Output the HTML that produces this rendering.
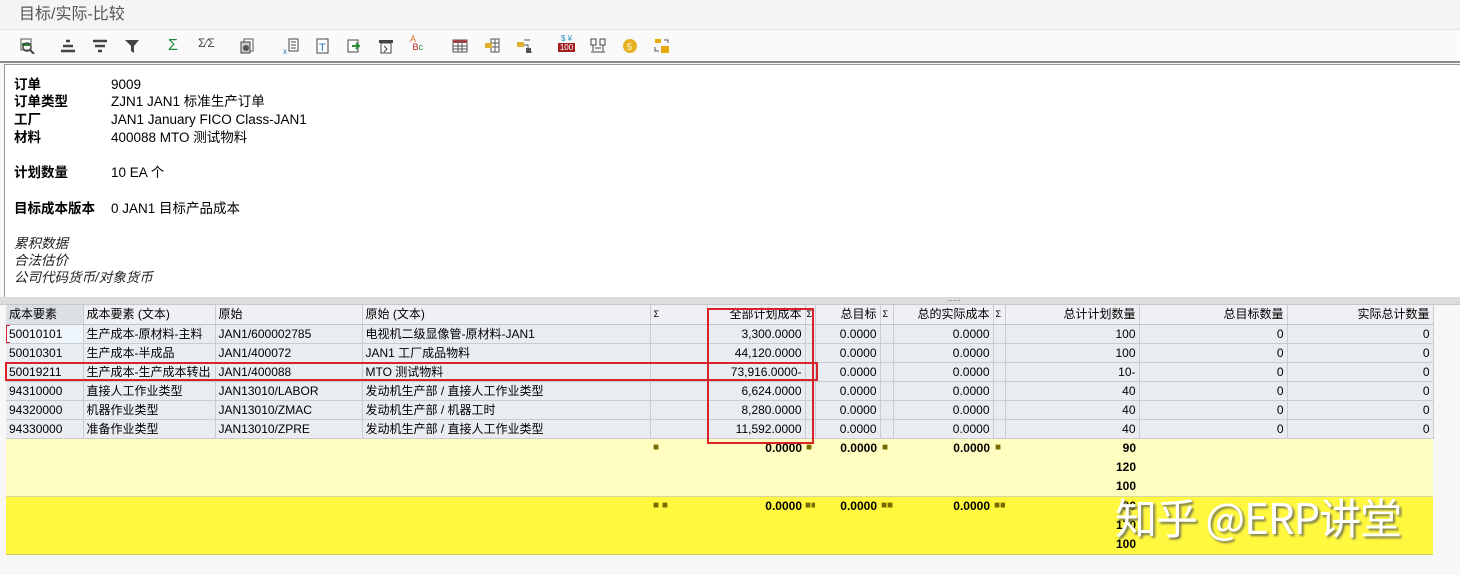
<!DOCTYPE html>
<html><head><meta charset="utf-8"><style>
*{margin:0;padding:0;box-sizing:border-box}
body{width:1460px;height:575px;overflow:hidden;background:#f7f7f7;font-family:"Liberation Sans","Noto Sans CJK SC",sans-serif;font-size:12px;color:#000;position:relative}
.a{position:absolute}
#title{left:0;top:0;width:1460px;height:30px;background:#f4f4f4;font-size:16px;color:#555;padding:5px 0 0 19px;border-bottom:1px solid #e2e2e2;line-height:20px}
#tb{left:0;top:30px;width:1460px;height:33px;background:#fafafa;border-bottom:2px solid #8a8a8a}
.ic{position:absolute;top:8px;width:16px;height:16px}
#hd{left:4px;top:64px;width:1456px;height:234px;background:#fff;border:1px solid #999;border-right:none}
.lb,.vl,.it{position:absolute;font-size:13.5px;line-height:17px;height:17px}
.lb{left:9px;font-weight:bold}
.vl{left:106px}
.it{left:9px;font-style:italic;color:#222}
#sep{left:0;top:297px;width:1460px;height:8px;background:#dcdcdc;border-bottom:1px solid #c8c8c8}
table{position:absolute;left:6px;top:305px;border-collapse:collapse;table-layout:fixed;width:1427px}
td{height:19px;border-right:1px solid #c9ccd2;border-bottom:1px solid #c9ccd2;padding:0 3px;white-space:nowrap;overflow:hidden;background:#e9ecf1;font-size:12px;line-height:18px}
tr.h td{height:19px;background:#eef0f3;border-bottom:1px solid #c0c4ca}
.r{text-align:right}
tr.y1 td{background:#fffdc0;border-right:none;vertical-align:top;font-weight:bold;border-bottom:1px solid #d8d6a0}
tr.y2 td{background:#fff83e;border-right:none;vertical-align:top;font-weight:bold;border-bottom:1px solid #d0c870}
.dot{color:#776b00;font-size:10px}
.rb{position:absolute;border:2px solid #d8232a}
#wm{left:1115px;top:492px;font-size:42px;color:#fff;text-shadow:2px 2px 2px #7a7a50;font-family:"Noto Sans CJK SC",sans-serif;letter-spacing:-1px;line-height:50px}
</style></head><body>
<div id="title" class="a">目标/实际-比较</div>
<div id="tb" class="a">
<svg class="ic" style="left:19px" viewBox="0 0 16 16"><rect x="2" y="1" width="10" height="11" fill="none" stroke="#555"/><rect x="3" y="5" width="8" height="3" fill="#2a8a3a"/><circle cx="8" cy="9" r="4" fill="none" stroke="#444" stroke-width="1.5"/><path d="M11 12l4 4" stroke="#444" stroke-width="2"/></svg>
<svg class="ic" style="left:60px" viewBox="0 0 16 16"><path d="M6 3h4M3 8h10M1 13h14" stroke="#444" stroke-width="2.5"/></svg>
<svg class="ic" style="left:92px" viewBox="0 0 16 16"><path d="M1 3h14M3 8h10M6 13h4" stroke="#444" stroke-width="2.5"/></svg>
<svg class="ic" style="left:124px" viewBox="0 0 16 16"><path d="M1 2h14l-5 6v7l-3-2V8z" fill="#444"/></svg>
<div class="a" style="left:168px;top:7px;color:#1a8a3a;font-size:16px">Σ</div>
<div class="a" style="left:198px;top:6px;color:#444;font-size:12px">Σ⁄Σ</div>
<svg class="ic" style="left:240px" viewBox="0 0 16 16"><rect x="4" y="1" width="9" height="12" fill="#fff" stroke="#555"/><rect x="1" y="4" width="9" height="11" fill="#ccc" stroke="#444"/><circle cx="6" cy="10" r="3" fill="#555"/></svg>
<svg class="ic" style="left:283px" viewBox="0 0 16 16"><rect x="6" y="1" width="9" height="12" fill="#fff" stroke="#444"/><path d="M8 4h5M8 7h5M8 10h5" stroke="#444"/><text x="0" y="16" font-size="8" fill="#2a7ac0">x</text></svg>
<svg class="ic" style="left:314px" viewBox="0 0 16 16"><rect x="3" y="1" width="11" height="14" fill="#fff" stroke="#444"/><text x="5" y="13" font-size="11" fill="#2a7ac0">T</text></svg>
<svg class="ic" style="left:346px" viewBox="0 0 16 16"><rect x="2" y="2" width="10" height="12" fill="#fff" stroke="#444"/><path d="M6 8h7M10 5l3 3-3 3" stroke="#2a8a3a" stroke-width="2" fill="none"/></svg>
<svg class="ic" style="left:378px" viewBox="0 0 16 16"><path d="M1 2h14v3H1z" fill="#444"/><rect x="3" y="5" width="10" height="10" fill="#fff" stroke="#444"/><path d="M6 8l3 3-3 3" stroke="#444" fill="none"/></svg>
<div class="a" style="left:410px;top:5px;font-size:9px;color:#d07020;line-height:8px">A<br>&nbsp;<span style="color:#c02020">B</span><span style="color:#2a8a3a">c</span></div>
<svg class="ic" style="left:452px" viewBox="0 0 16 16"><rect x="1" y="2" width="14" height="12" fill="#fff" stroke="#555"/><rect x="1" y="2" width="14" height="3" fill="#b04040"/><path d="M1 8h14M1 11h14M6 2v12M10 2v12" stroke="#555"/></svg>
<svg class="ic" style="left:484px" viewBox="0 0 16 16"><rect x="7" y="1" width="8" height="13" fill="#fff" stroke="#555"/><path d="M7 5h8M7 9h8M11 1v13" stroke="#555"/><rect x="1" y="5" width="7" height="5" fill="#e0b030"/></svg>
<svg class="ic" style="left:516px" viewBox="0 0 16 16"><rect x="1" y="4" width="7" height="5" fill="#e0b030"/><path d="M8 2h6M8 7h4v7h4" stroke="#555" fill="none"/><rect x="10" y="10" width="5" height="5" fill="#555"/></svg>
<div class="a" style="left:558px;top:4px;width:17px;font-size:8px;line-height:9px;text-align:center"><span style="color:#2a8ac0">$ ¥</span><br><span style="background:#a02020;color:#fff;display:block">100</span></div>
<svg class="ic" style="left:590px" viewBox="0 0 16 16"><rect x="1" y="1" width="5" height="6" fill="none" stroke="#444"/><rect x="10" y="1" width="5" height="6" fill="none" stroke="#444"/><path d="M3 7v6M13 7v6M1 14h14M5 10h6" stroke="#444"/></svg>
<svg class="ic" style="left:622px" viewBox="0 0 16 16"><circle cx="8" cy="8" r="7" fill="#e8b020"/><text x="5" y="12" font-size="9" fill="#fff">5</text></svg>
<svg class="ic" style="left:654px" viewBox="0 0 16 16"><rect x="1" y="1" width="6" height="4" fill="#e8a810"/><rect x="7" y="8" width="8" height="7" fill="#e8a810"/><path d="M10 2h4v3M1 9v4h4" stroke="#555" fill="none"/></svg>
</div>
<div id="hd" class="a">
<div class="lb" style="top:11px">订单</div><div class="vl" style="top:11px">9009</div>
<div class="lb" style="top:28px">订单类型</div><div class="vl" style="top:28px">ZJN1 JAN1 标准生产订单</div>
<div class="lb" style="top:46px">工厂</div><div class="vl" style="top:46px">JAN1 January FICO Class-JAN1</div>
<div class="lb" style="top:64px">材料</div><div class="vl" style="top:64px">400088 MTO 测试物料</div>
<div class="lb" style="top:99px">计划数量</div><div class="vl" style="top:99px">10 EA 个</div>
<div class="lb" style="top:135px">目标成本版本</div><div class="vl" style="top:135px">0 JAN1 目标产品成本</div>
<div class="it" style="top:170px">累积数据</div>
<div class="it" style="top:187px">合法估价</div>
<div class="it" style="top:204px">公司代码货币/对象货币</div>
</div>
<div id="sep" class="a"><div class="a" style="left:948px;top:-4px;font-size:9px;color:#666">.....</div></div>
<table>
<colgroup><col style="width:77px"><col style="width:132px"><col style="width:147px"><col style="width:288px"><col style="width:57px"><col style="width:98px"><col style="width:10px"><col style="width:65px"><col style="width:13px"><col style="width:100px"><col style="width:12px"><col style="width:134px"><col style="width:148px"><col style="width:146px"></colgroup>
<tr class="h"><td style="background:#dcdfe4">成本要素</td><td>成本要素 (文本)</td><td>原始</td><td>原始 (文本)</td><td style="font-size:9px">Σ</td><td class="r">全部计划成本</td><td style="font-size:9px;padding:0 1px">Σ</td><td class="r">总目标</td><td style="font-size:9px;padding:0 2px">Σ</td><td class="r">总的实际成本</td><td style="font-size:9px;padding:0 2px">Σ</td><td class="r">总计计划数量</td><td class="r">总目标数量</td><td class="r">实际总计数量</td></tr>
<tr><td style="background:#eef5fb">50010101</td><td>生产成本-原材料-主料</td><td>JAN1/600002785</td><td>电视机二级显像管-原材料-JAN1</td><td></td><td class="r">3,300.0000</td><td></td><td class="r">0.0000</td><td></td><td class="r">0.0000</td><td></td><td class="r">100</td><td class="r">0</td><td class="r">0</td></tr>
<tr><td>50010301</td><td>生产成本-半成品</td><td>JAN1/400072</td><td>JAN1 工厂成品物料</td><td></td><td class="r">44,120.0000</td><td></td><td class="r">0.0000</td><td></td><td class="r">0.0000</td><td></td><td class="r">100</td><td class="r">0</td><td class="r">0</td></tr>
<tr><td>50019211</td><td>生产成本-生产成本转出</td><td>JAN1/400088</td><td>MTO 测试物料</td><td></td><td class="r">73,916.0000-</td><td></td><td class="r">0.0000</td><td></td><td class="r">0.0000</td><td></td><td class="r">10-</td><td class="r">0</td><td class="r">0</td></tr>
<tr><td>94310000</td><td>直接人工作业类型</td><td>JAN13010/LABOR</td><td>发动机生产部 / 直接人工作业类型</td><td></td><td class="r">6,624.0000</td><td></td><td class="r">0.0000</td><td></td><td class="r">0.0000</td><td></td><td class="r">40</td><td class="r">0</td><td class="r">0</td></tr>
<tr><td>94320000</td><td>机器作业类型</td><td>JAN13010/ZMAC</td><td>发动机生产部 / 机器工时</td><td></td><td class="r">8,280.0000</td><td></td><td class="r">0.0000</td><td></td><td class="r">0.0000</td><td></td><td class="r">40</td><td class="r">0</td><td class="r">0</td></tr>
<tr><td>94330000</td><td>准备作业类型</td><td>JAN13010/ZPRE</td><td>发动机生产部 / 直接人工作业类型</td><td></td><td class="r">11,592.0000</td><td></td><td class="r">0.0000</td><td></td><td class="r">0.0000</td><td></td><td class="r">40</td><td class="r">0</td><td class="r">0</td></tr>
<tr class="y1"><td style="height:57px"></td><td></td><td></td><td></td><td class="dot">■</td><td class="r">0.0000</td><td class="dot" style="padding:0 1px">■</td><td class="r">0.0000</td><td class="dot" style="padding:0 2px">■</td><td class="r">0.0000</td><td class="dot" style="padding:0 2px">■</td><td class="r" style="line-height:19px">90<br>120<br>100</td><td></td><td></td></tr>
<tr class="y2"><td style="height:55px"></td><td></td><td></td><td></td><td class="dot">■ ■</td><td class="r">0.0000</td><td class="dot" style="padding:0">■■</td><td class="r">0.0000</td><td class="dot" style="padding:0 1px">■■</td><td class="r">0.0000</td><td class="dot" style="padding:0 1px">■■</td><td class="r" style="line-height:19px">90<br>170<br>100</td><td></td><td></td></tr>
</table>
<div class="rb" style="left:707px;top:308px;width:107px;height:136px"></div>
<div class="rb" style="left:5px;top:362px;width:813px;height:19px"></div>
<div class="a" style="left:6px;top:325px;width:4px;height:18px;border:1px solid #d8232a;border-right:none"></div>
<div id="wm" class="a">知乎 @ERP讲堂</div>
</body></html>
